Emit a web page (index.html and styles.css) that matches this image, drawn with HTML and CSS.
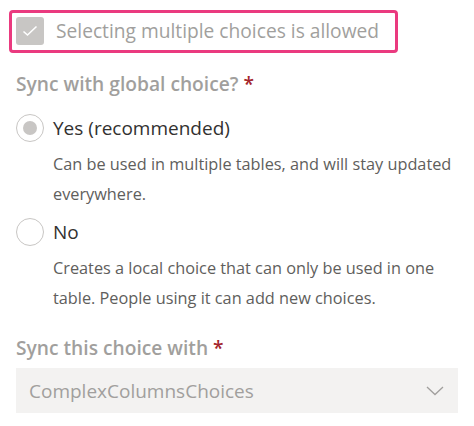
FILE: index.html
```html
<!DOCTYPE html>
<html lang="en">
<head>
<meta charset="utf-8">
<title>Choice settings</title>
<link rel="stylesheet" href="styles.css">
</head>
<body>
<div class="page">
  <div class="highlight">
    <span class="checkbox">
      <svg width="16" height="12" viewBox="0 0 16 12"><path d="M1.5 6.5 L5.5 10 L14.5 1.5" fill="none" stroke="#ffffff" stroke-width="1.6"/></svg>
    </span>
    <span class="check-label">Selecting multiple choices is allowed</span>
  </div>

  <div class="field-label">Sync with global choice? <span class="req">*</span></div>

  <div class="radio-row first">
    <span class="radio checked"><span class="dot"></span></span>
    <span class="radio-label">Yes (recommended)</span>
  </div>
  <p class="desc">Can be used in multiple tables, and will stay updated everywhere.</p>

  <div class="radio-row">
    <span class="radio"></span>
    <span class="radio-label">No</span>
  </div>
  <p class="desc">Creates a local choice that can only be used in one table. People using it can add new choices.</p>

  <div class="field-label second">Sync this choice with <span class="req">*</span></div>

  <div class="dropdown">
    <span class="dd-text">ComplexColumnsChoices</span>
    <svg class="chev" width="18" height="10" viewBox="0 0 18 10"><path d="M1 1 L9 8.5 L17 1" fill="none" stroke="#a19f9d" stroke-width="1.3"/></svg>
  </div>
</div>
</body>
</html>
```

FILE: styles.css
```css
html, body {
  margin: 0;
  padding: 0;
  background: #ffffff;
}

body {
  font-family: "Open Sans", "Noto Sans", sans-serif;
}

.page {
  padding: 10px 16px 0 16px;
  width: 442px;
}

.highlight {
  display: inline-flex;
  align-items: center;
  margin-left: -7px;
  border: 3px solid #ea3a7f;
  border-radius: 4px;
  padding: 3px 16px 4px 4px;
  gap: 12px;
}

.checkbox {
  width: 28px;
  height: 28px;
  border-radius: 3px;
  background: #c8c6c4;
  display: flex;
  align-items: center;
  justify-content: center;
}

.check-label {
  font-size: 19.2px;
  color: #a19f9d;
  line-height: 30px;
}

.field-label {
  margin-top: 18px;
  font-size: 19.2px;
  font-weight: 600;
  color: #a19f9d;
  line-height: 26px;
}

.field-label.second {
  margin-top: 22px;
}

.req {
  color: #a4262c;
}

.radio-row {
  display: flex;
  align-items: center;
  gap: 9px;
  margin-top: 8px;
  height: 30px;
}

.radio-row.first {
  margin-top: 16px;
}

.radio {
  width: 28px;
  height: 28px;
  box-sizing: border-box;
  border: 1.5px solid #c8c6c4;
  border-radius: 50%;
  display: flex;
  align-items: center;
  justify-content: center;
}

.dot {
  width: 14px;
  height: 14px;
  border-radius: 50%;
  background: #c8c6c4;
}

.radio-label {
  font-size: 19px;
  color: #323130;
}

.desc {
  margin: 6px 0 0 0;
  padding-left: 37px;
  font-size: 16.3px;
  line-height: 30px;
  color: #605e5c;
}

.dropdown {
  margin-top: 7px;
  height: 45px;
  background: #f3f2f1;
  display: flex;
  align-items: center;
  justify-content: space-between;
  padding: 0 14px 0 13px;
}

.dd-text {
  font-size: 19px;
  color: #a19f9d;
}

.chev {
  display: block;
}
```
